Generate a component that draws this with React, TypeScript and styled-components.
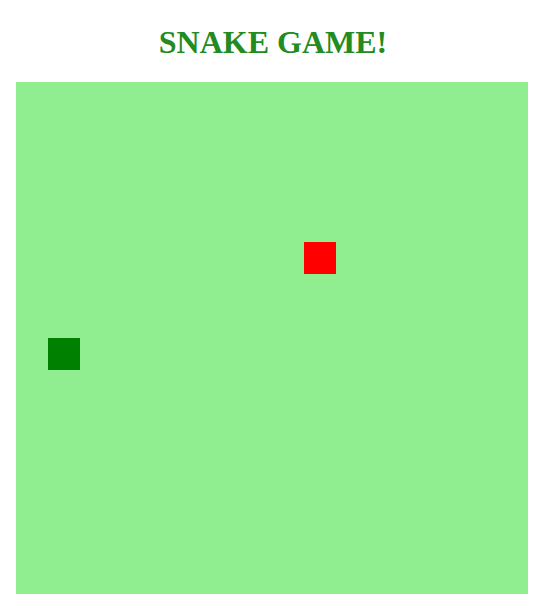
import React from 'react';
import styled, { createGlobalStyle } from 'styled-components';

const CELL = 32;
const GRID = 16;

interface Point {
  x: number;
  y: number;
}

const GlobalStyle = createGlobalStyle`
  body {
    margin: 0;
    background: #ffffff;
    font-family: "Liberation Serif", "Times New Roman", serif;
  }
`;

const Page = styled.div`
  display: flex;
  flex-direction: column;
  align-items: center;
  padding: 0 16px;
`;

const Title = styled.h1`
  margin: 24px 0 21px;
  font-size: 32px;
  font-weight: 700;
  line-height: normal;
  color: #228b22;
  text-align: center;
`;

const Board = styled.div`
  display: grid;
  grid-template-columns: repeat(${GRID}, ${CELL}px);
  grid-template-rows: repeat(${GRID}, ${CELL}px);
  background: #90ee90;
  align-self: flex-start;
`;

const Cell = styled.div<{ $kind: 'snake' | 'food' }>`
  background: ${({ $kind }) => ($kind === 'snake' ? '#008000' : '#ff0000')};
`;

const snake: Point[] = [{ x: 1, y: 8 }];
const food: Point = { x: 9, y: 5 };

const App: React.FC = () => {
  return (
    <>
      <GlobalStyle />
      <Page>
        <Title>SNAKE GAME!</Title>
        <Board>
          {snake.map((p, i) => (
            <Cell
              key={i}
              $kind="snake"
              style={{ gridColumn: p.x + 1, gridRow: p.y + 1 }}
            />
          ))}
          <Cell $kind="food" style={{ gridColumn: food.x + 1, gridRow: food.y + 1 }} />
        </Board>
      </Page>
    </>
  );
};

export default App;
